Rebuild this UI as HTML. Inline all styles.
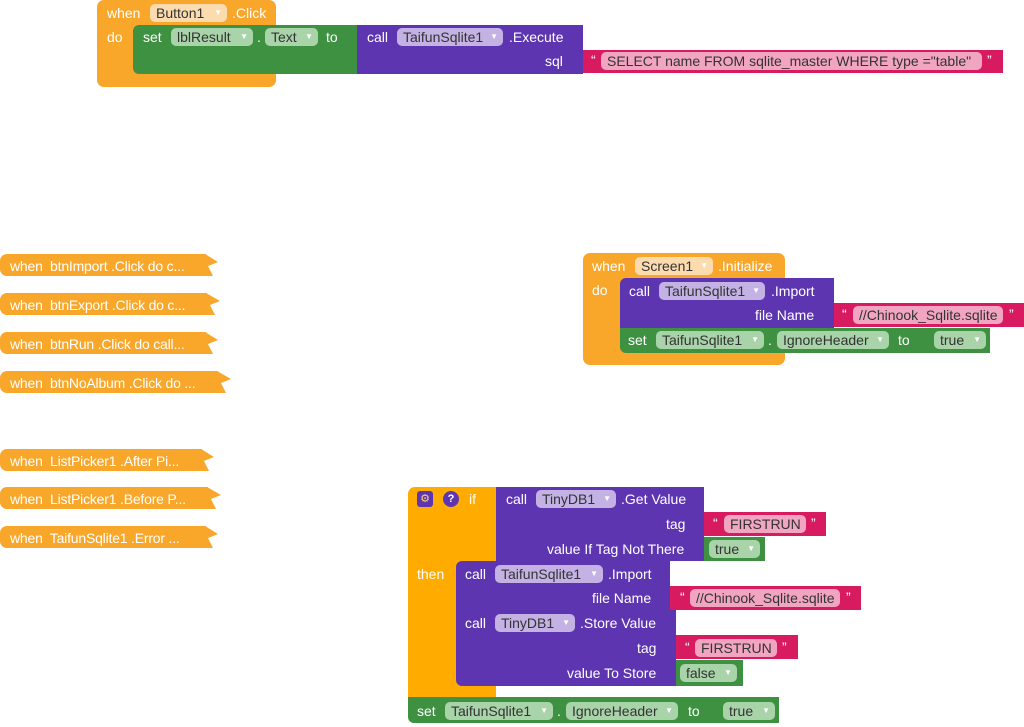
<!DOCTYPE html>
<html><head><meta charset="utf-8"><style>
body{margin:0;width:1024px;height:727px;background:#fff;position:relative;overflow:hidden;font-family:"Liberation Sans",sans-serif}
.b{position:absolute}
.o{background:#f9a72b}.y{background:#ffab00}.p{background:#5e35b1}.g{background:#3f9142}.k{background:#d81b60}
.t{position:absolute;color:#fff;font-size:14px;line-height:16px;white-space:nowrap}
.c{position:absolute;height:18px;border-radius:5px;font-size:14px;line-height:18px;color:#333;white-space:nowrap;box-sizing:border-box;padding-left:6px}
.c i{position:absolute;right:5px;top:0;font-style:normal;font-size:8px;color:#fff}
.co{background:#fcdcae}.cg{background:#a9d3a9}.cp{background:#c4b2e4}.ck{background:#f2a5c1}
.col{position:absolute;height:22px;border-radius:7px 0 0 7px;background:#f9a72b}
.col .t{top:4px;left:10px;letter-spacing:-0.2px}
</style></head><body>

<!-- Block 1 -->
<div class="b o" style="left:97px;top:0;width:179px;height:87px;border-radius:7px"></div>
<div class="b g" style="left:133px;top:25px;width:224px;height:49px;border-radius:6px 0 0 6px"></div>
<div class="b p" style="left:357px;top:25px;width:226px;height:49px"></div>
<div class="b k" style="left:583px;top:50px;width:420px;height:23px"></div>
<span class="t" style="left:107px;top:5px">when</span>
<div class="c co" style="left:150px;top:4px;width:77px">Button1<i>▼</i></div>
<span class="t" style="left:232px;top:5px">.Click</span>
<span class="t" style="left:107px;top:29px">do</span>
<span class="t" style="left:143px;top:29px">set</span>
<div class="c cg" style="left:171px;top:28px;width:82px">lblResult<i>▼</i></div>
<span class="t" style="left:257px;top:29px">.</span>
<div class="c cg" style="left:265px;top:28px;width:53px">Text<i>▼</i></div>
<span class="t" style="left:326px;top:29px">to</span>
<span class="t" style="left:367px;top:29px">call</span>
<div class="c cp" style="left:397px;top:28px;width:106px">TaifunSqlite1<i>▼</i></div>
<span class="t" style="left:509px;top:29px">.Execute</span>
<span class="t" style="left:545px;top:53px">sql</span>
<span class="t" style="left:591px;top:52px">“</span>
<div class="c ck" style="left:601px;top:52px;width:381px">SELECT name FROM sqlite_master WHERE type ="table"</div>
<span class="t" style="left:987px;top:52px">”</span>

<!-- Collapsed -->
<div class="col" style="left:0;top:254px;width:206px"><span class="t">when&nbsp; btnImport .Click do c...</span></div>
<div class="col" style="left:0;top:293px;width:207px"><span class="t">when&nbsp; btnExport .Click do c...</span></div>
<div class="col" style="left:0;top:332px;width:206px"><span class="t">when&nbsp; btnRun .Click do call...</span></div>
<div class="col" style="left:0;top:371px;width:218px"><span class="t">when&nbsp; btnNoAlbum .Click do ...</span></div>
<div class="col" style="left:0;top:449px;width:202px"><span class="t">when&nbsp; ListPicker1 .After Pi...</span></div>
<div class="col" style="left:0;top:487px;width:208px"><span class="t">when&nbsp; ListPicker1 .Before P...</span></div>
<div class="col" style="left:0;top:526px;width:206px"><span class="t">when&nbsp; TaifunSqlite1 .Error ...</span></div>
<svg class="b" style="left:0;top:0" width="240" height="560">
<g fill="#f9a72b">
<polygon points="205,254 218,262 208,266 213,276 205,276"/>
<polygon points="206,293 220,301 210,305 215,315 206,315"/>
<polygon points="205,332 218,340 208,344 213,354 205,354"/>
<polygon points="217,371 231,379 221,383 226,393 217,393"/>
<polygon points="201,449 214,457 204,461 209,471 201,471"/>
<polygon points="207,487 221,495 211,499 216,509 207,509"/>
<polygon points="205,526 218,534 208,538 213,548 205,548"/>
</g></svg>

<!-- Screen1 -->
<div class="b o" style="left:583px;top:253px;width:202px;height:112px;border-radius:7px"></div>
<div class="b p" style="left:620px;top:278px;width:214px;height:50px;border-radius:6px 0 0 0"></div>
<div class="b k" style="left:834px;top:303px;width:190px;height:24px"></div>
<div class="b g" style="left:620px;top:328px;width:370px;height:25px;border-radius:0 0 0 6px"></div>
<span class="t" style="left:592px;top:258px">when</span>
<div class="c co" style="left:635px;top:257px;width:78px">Screen1<i>▼</i></div>
<span class="t" style="left:718px;top:258px">.Initialize</span>
<span class="t" style="left:592px;top:282px">do</span>
<span class="t" style="left:629px;top:283px">call</span>
<div class="c cp" style="left:659px;top:282px;width:106px">TaifunSqlite1<i>▼</i></div>
<span class="t" style="left:771px;top:283px">.Import</span>
<span class="t" style="left:755px;top:307px">file Name</span>
<span class="t" style="left:842px;top:306px">“</span>
<div class="c ck" style="left:853px;top:306px;width:150px">//Chinook_Sqlite.sqlite</div>
<span class="t" style="left:1009px;top:306px">”</span>
<span class="t" style="left:628px;top:332px">set</span>
<div class="c cg" style="left:656px;top:331px;width:108px">TaifunSqlite1<i>▼</i></div>
<span class="t" style="left:768px;top:332px">.</span>
<div class="c cg" style="left:777px;top:331px;width:112px">IgnoreHeader<i>▼</i></div>
<span class="t" style="left:898px;top:332px">to</span>
<div class="c cg" style="left:934px;top:331px;width:52px">true<i>▼</i></div>

<!-- If block -->
<div class="b y" style="left:408px;top:487px;width:88px;height:210px;border-radius:7px 0 0 0"></div>
<div class="b p" style="left:496px;top:487px;width:208px;height:74px"></div>
<div class="b k" style="left:704px;top:512px;width:122px;height:24px"></div>
<div class="b g" style="left:704px;top:537px;width:61px;height:24px"></div>
<div class="b p" style="left:456px;top:561px;width:214px;height:49px;border-radius:6px 0 0 0"></div>
<div class="b k" style="left:670px;top:586px;width:191px;height:24px"></div>
<div class="b p" style="left:456px;top:610px;width:220px;height:76px;border-radius:0 0 0 6px"></div>
<div class="b k" style="left:676px;top:635px;width:122px;height:24px"></div>
<div class="b g" style="left:676px;top:660px;width:67px;height:26px"></div>
<div class="b g" style="left:408px;top:697px;width:371px;height:26px;border-radius:0 0 0 6px"></div>
<div class="b" style="left:417px;top:491px;width:16px;height:16px;border-radius:3px;background:#5e35b1;color:#fbd76b;font-size:11px;line-height:16px;text-align:center">⚙</div>
<div class="b" style="left:443px;top:491px;width:16px;height:16px;border-radius:8px;background:#5e35b1;color:#fff;font-size:11px;font-weight:bold;line-height:16px;text-align:center">?</div>
<span class="t" style="left:469px;top:491px">if</span>
<span class="t" style="left:506px;top:491px">call</span>
<div class="c cp" style="left:536px;top:490px;width:80px">TinyDB1<i>▼</i></div>
<span class="t" style="left:621px;top:491px">.Get Value</span>
<span class="t" style="left:666px;top:516px">tag</span>
<span class="t" style="left:713px;top:515px">“</span>
<div class="c ck" style="left:724px;top:515px;width:82px">FIRSTRUN</div>
<span class="t" style="left:811px;top:515px">”</span>
<span class="t" style="left:547px;top:541px">value If Tag Not There</span>
<div class="c cg" style="left:709px;top:540px;width:51px">true<i>▼</i></div>
<span class="t" style="left:417px;top:566px">then</span>
<span class="t" style="left:465px;top:566px">call</span>
<div class="c cp" style="left:495px;top:565px;width:108px">TaifunSqlite1<i>▼</i></div>
<span class="t" style="left:608px;top:566px">.Import</span>
<span class="t" style="left:592px;top:590px">file Name</span>
<span class="t" style="left:680px;top:589px">“</span>
<div class="c ck" style="left:690px;top:589px;width:150px">//Chinook_Sqlite.sqlite</div>
<span class="t" style="left:846px;top:589px">”</span>
<span class="t" style="left:465px;top:615px">call</span>
<div class="c cp" style="left:495px;top:614px;width:80px">TinyDB1<i>▼</i></div>
<span class="t" style="left:580px;top:615px">.Store Value</span>
<span class="t" style="left:637px;top:640px">tag</span>
<span class="t" style="left:685px;top:639px">“</span>
<div class="c ck" style="left:695px;top:639px;width:82px">FIRSTRUN</div>
<span class="t" style="left:782px;top:639px">”</span>
<span class="t" style="left:567px;top:665px">value To Store</span>
<div class="c cg" style="left:680px;top:664px;width:57px">false<i>▼</i></div>
<span class="t" style="left:417px;top:703px">set</span>
<div class="c cg" style="left:445px;top:702px;width:108px">TaifunSqlite1<i>▼</i></div>
<span class="t" style="left:557px;top:703px">.</span>
<div class="c cg" style="left:566px;top:702px;width:112px">IgnoreHeader<i>▼</i></div>
<span class="t" style="left:688px;top:703px">to</span>
<div class="c cg" style="left:723px;top:702px;width:52px">true<i>▼</i></div>
</body></html>
